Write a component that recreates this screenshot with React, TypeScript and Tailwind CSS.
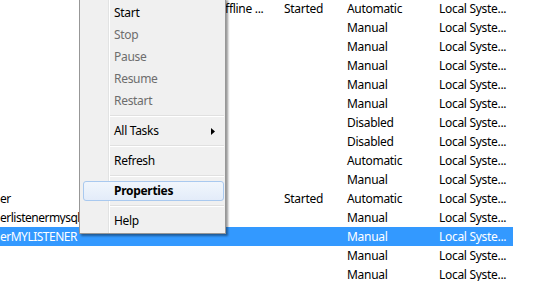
const rows = [
  { name: "", desc: "Offline ...", status: "Started", startup: "Automatic", logon: "Local Syste..." },
  { name: "", desc: "", status: "", startup: "Manual", logon: "Local Syste..." },
  { name: "", desc: "", status: "", startup: "Manual", logon: "Local Syste..." },
  { name: "", desc: "", status: "", startup: "Manual", logon: "Local Syste..." },
  { name: "", desc: "", status: "", startup: "Manual", logon: "Local Syste..." },
  { name: "", desc: "", status: "", startup: "Manual", logon: "Local Syste..." },
  { name: "", desc: "", status: "", startup: "Disabled", logon: "Local Syste..." },
  { name: "", desc: "", status: "", startup: "Disabled", logon: "Local Syste..." },
  { name: "", desc: "", status: "", startup: "Automatic", logon: "Local Syste..." },
  { name: "", desc: "", status: "", startup: "Manual", logon: "Local Syste..." },
  { name: "er", desc: "", status: "Started", startup: "Automatic", logon: "Local Syste..." },
  { name: "erlistenermysqlserver", desc: "", status: "", startup: "Manual", logon: "Local Syste..." },
  { name: "erMYLISTENER", desc: "", status: "", startup: "Manual", logon: "Local Syste...", selected: true },
  { name: "", desc: "", status: "", startup: "Manual", logon: "Local Syste..." },
  { name: "", desc: "", status: "", startup: "Manual", logon: "Local Syste..." },
];

type Item = { label: string; disabled?: boolean; bold?: boolean; hot?: boolean; sub?: boolean } | "sep";

const menu: Item[] = [
  { label: "Start" },
  { label: "Stop", disabled: true },
  { label: "Pause", disabled: true },
  { label: "Resume", disabled: true },
  { label: "Restart", disabled: true },
  "sep",
  { label: "All Tasks", sub: true },
  "sep",
  { label: "Refresh" },
  "sep",
  { label: "Properties", bold: true, hot: true },
  "sep",
  { label: "Help" },
];

function ContextMenu() {
  return (
    <div className="absolute left-[79px] top-[-2px] w-[147px] bg-[#f0f0f0] border border-[#979797] pt-[3px] pb-[1px] shadow-[2px_2px_2px_rgba(0,0,0,0.4)]">
      {/* icon gutter */}
      <div className="absolute left-[28px] top-0 bottom-0 w-[2px] border-l border-[#e2e3e3] bg-white" />
      {menu.map((item, i) =>
        item === "sep" ? (
          <div key={i} className="h-[8px] pl-[30px] pr-[1px] pt-[3px]">
            <div className="h-[2px] border-t border-[#e0e0e0] bg-white" />
          </div>
        ) : (
          <div key={i} className="relative h-[22px] flex items-center">
            {item.hot && (
              <div className="absolute left-[3px] right-[1px] top-[1px] bottom-[1px] rounded-[3px] border border-[#a9c9ef] bg-gradient-to-b from-[#f1f6fc] to-[#e3ecf9]" />
            )}
            <span
              className={`relative pl-[34px] ${item.disabled ? "text-[#6d6d6d]" : "text-black"} ${item.bold ? "font-bold" : ""}`}
            >
              {item.label}
            </span>
            {item.sub && (
              <svg className="absolute left-[131px] top-[8px]" width="4" height="7" viewBox="0 0 4 7">
                <path d="M0 0 L4 3.5 L0 7 Z" fill="#000" />
              </svg>
            )}
          </div>
        )
      )}
    </div>
  );
}

export default function App() {
  return (
    <div
      className="relative w-[535px] h-[281px] overflow-hidden bg-white text-[12px] leading-none tracking-[-0.3px]"
      style={{ fontFamily: '"Segoe UI", "Noto Sans", sans-serif' }}
    >
      <div className="mt-[-1px] w-[513px]">
        {rows.map((r, i) => (
          <div
            key={i}
            className={`flex h-[19px] items-center whitespace-nowrap ${r.selected ? "bg-[#3399ff] text-white" : "text-black"}`}
          >
            <div className="w-[216px] overflow-hidden tracking-[-0.5px]">{r.name}</div>
            <div className="w-[68px] overflow-hidden">{r.desc}</div>
            <div className="w-[63px]">{r.status}</div>
            <div className="w-[92px]">{r.startup}</div>
            <div className="flex-1">{r.logon}</div>
          </div>
        ))}
      </div>
      <ContextMenu />
    </div>
  );
}
